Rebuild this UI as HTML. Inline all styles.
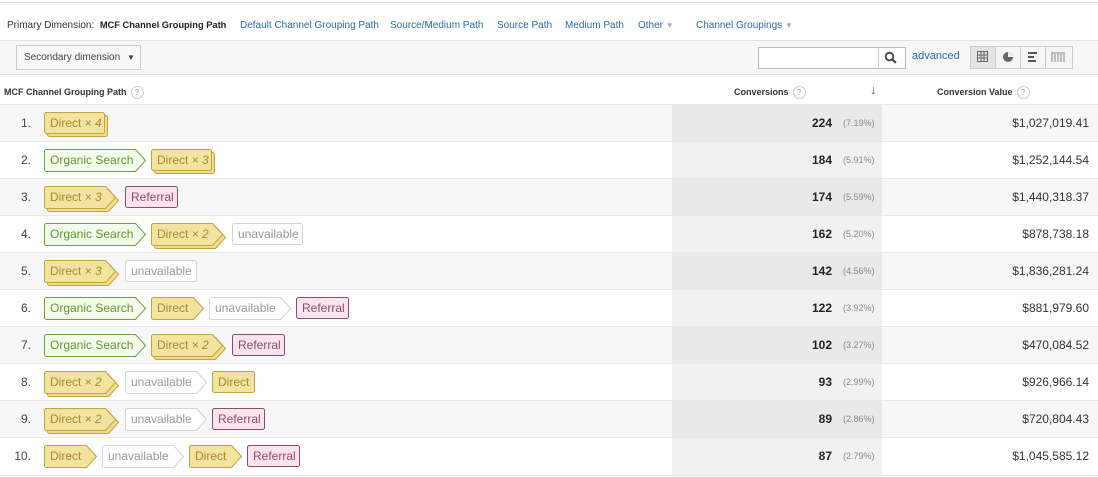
<!DOCTYPE html><html><head><meta charset="utf-8"><style>
body{margin:0;width:1098px;height:477px;overflow:hidden;background:#fff;font-family:"Liberation Sans",sans-serif;position:relative}
.a{position:absolute;white-space:nowrap}
.l{color:#2a6ab0}
.row{position:absolute;left:0;width:1098px;height:37px;border-top:1px solid #e8e8e8}
.row .c{position:absolute;left:672px;width:210px;top:0;height:37px}
.n{position:absolute;left:0;width:31px;text-align:right;top:11px;font-size:12px;color:#444}
.cv{position:absolute;left:700px;width:132px;text-align:right;top:11px;font-size:12px;font-weight:bold;color:#222}
.pc{position:absolute;left:843px;top:13px;font-size:9px;color:#888}
.val{position:absolute;right:9px;top:11px;font-size:12px;color:#333}
svg{position:absolute;left:0;top:0}
svg text{font-family:"Liberation Sans",sans-serif;font-size:12px}
.q{display:inline-block;width:11px;height:11px;border:1px solid #ccc;border-radius:50%;font-size:8px;color:#bbb;text-align:center;line-height:11px;vertical-align:middle;margin-left:4px}
</style></head><body>
<div class="a" style="left:0;top:2px;width:1098px;border-top:1px solid #e6e6e6"></div>
<div class="a" style="left:7px;top:20px;font-size:10px;color:#333">Primary Dimension:&nbsp; <span style="color:#222;font-weight:bold;font-size:9.3px">MCF Channel Grouping Path</span></div>
<div class="a l" style="left:240px;top:20px;font-size:10px">Default Channel Grouping Path</div>
<div class="a l" style="left:390px;top:20px;font-size:10px">Source/Medium Path</div>
<div class="a l" style="left:497px;top:20px;font-size:10px">Source Path</div>
<div class="a l" style="left:565px;top:20px;font-size:10px">Medium Path</div>
<div class="a l" style="left:638px;top:20px;font-size:10px">Other <span style="color:#aaa;font-size:8px">▼</span></div>
<div class="a l" style="left:696px;top:20px;font-size:10px">Channel Groupings <span style="color:#aaa;font-size:8px">▼</span></div>
<div class="a" style="left:0;top:40px;width:1098px;height:33px;background:#f7f7f7;border-top:1px solid #e2e2e2;border-bottom:1px solid #e2e2e2"></div>
<div class="a" style="left:16px;top:45px;width:123px;height:23px;border:1px solid #ccc;background:#f8f8f8;font-size:10px;color:#444;line-height:23px;text-indent:7px">Secondary dimension <span style="font-size:8px;margin-left:4px">▼</span></div>
<div class="a" style="left:758px;top:47px;width:146px;height:20px;border:1px solid #bbb;background:#fff"></div>
<div class="a" style="left:878px;top:47px;width:1px;height:20px;background:#ccc"></div>
<svg style="left:884px;top:51px" width="14" height="14"><circle cx="5.5" cy="5.5" r="3.8" fill="none" stroke="#444" stroke-width="1.8"/><path d="M8.3 8.3l3.5 3.5" stroke="#444" stroke-width="2.2"/></svg>
<div class="a l" style="left:912px;top:50px;font-size:11px">advanced</div>
<div class="a" style="left:970px;top:46px;width:101px;height:21px;border:1px solid #ccc;background:#f5f5f5"></div>
<div class="a" style="left:971px;top:47px;width:24px;height:21px;background:#e4e4e4"></div>
<div class="a" style="left:995px;top:47px;width:1px;height:21px;background:#ccc"></div>
<div class="a" style="left:1020px;top:47px;width:1px;height:21px;background:#ccc"></div>
<div class="a" style="left:1045px;top:47px;width:1px;height:21px;background:#ccc"></div>
<svg style="left:977px;top:51px" width="90" height="12"><g stroke="#666" fill="none" stroke-width="1"><rect x=".5" y=".5" width="10" height="10"/><path d="M4 .5v10M7 .5v10M.5 4h10M.5 7h10"/></g><circle cx="31" cy="6" r="5" fill="#666"/><path d="M31 6V1a5 5 0 0 1 5 5z" fill="#eee"/><path d="M51 2h9M51 6h6M51 10h8" stroke="#555" stroke-width="2"/><path d="M75 1v10M78 3v8M81 3v8M84 3v8M87 3v8M75 2h13" stroke="#888" stroke-width="1"/></svg>
<div class="a" style="left:4px;top:86px;font-size:9px;font-weight:bold;color:#333">MCF Channel Grouping Path<span class="q">?</span></div>
<div class="a" style="left:734px;top:86px;font-size:9px;font-weight:bold;color:#333">Conversions<span class="q">?</span></div>
<div class="a" style="left:870px;top:82px;font-size:13px;color:#555">↓</div>
<div class="a" style="left:937px;top:86px;font-size:9px;font-weight:bold;color:#333">Conversion Value<span class="q">?</span></div>

<div class="row" style="top:104px;background:#f7f7f7"><div class="c" style="background:#e9e9e9"></div><div class="n">1.</div>
<svg width="600" height="37"><rect x="47.5" y="10.5" width="60" height="21" rx="2" fill="#f0dc8c" stroke="#c1a43c"/><rect x="44.5" y="7.5" width="60" height="21" rx="2" fill="#f3e3a0" stroke="#c1a43c"/><text x="50" y="22" fill="#a28c2c">Direct <tspan font-style="italic">× 4</tspan></text></svg>
<div class="cv">224</div><div class="pc">(7.19%)</div><div class="val">$1,027,019.41</div></div>

<div class="row" style="top:141px;background:#fff"><div class="c" style="background:#f1f1f1"></div><div class="n">2.</div>
<svg width="600" height="37"><path d="M46.5 7.5h89l10 11l-10 11h-89a2 2 0 0 1-2-2v-18a2 2 0 0 1 2-2z" fill="#f4fbec" stroke="#6aa33a"/><text x="50" y="22" fill="#5d9a2e">Organic Search</text><rect x="154.5" y="10.5" width="60" height="21" rx="2" fill="#f0dc8c" stroke="#c1a43c"/><rect x="151.5" y="7.5" width="60" height="21" rx="2" fill="#f3e3a0" stroke="#c1a43c"/><text x="157" y="22" fill="#a28c2c">Direct <tspan font-style="italic">× 3</tspan></text></svg>
<div class="cv">184</div><div class="pc">(5.91%)</div><div class="val">$1,252,144.54</div></div>

<div class="row" style="top:178px;background:#f7f7f7"><div class="c" style="background:#e9e9e9"></div><div class="n">3.</div>
<svg width="600" height="37"><path d="M49.5 10.5h59l10 11l-10 11h-59a2 2 0 0 1-2-2v-18a2 2 0 0 1 2-2z" fill="#f0dc8c" stroke="#c1a43c"/><path d="M46.5 7.5h59l10 11l-10 11h-59a2 2 0 0 1-2-2v-18a2 2 0 0 1 2-2z" fill="#f3e3a0" stroke="#c1a43c"/><text x="50" y="22" fill="#a28c2c">Direct <tspan font-style="italic">× 3</tspan></text><rect x="125.5" y="7.5" width="52" height="21" rx="2" fill="#fce4ef" stroke="#8c4c6c"/><text x="131" y="22" fill="#8c4c6c">Referral</text></svg>
<div class="cv">174</div><div class="pc">(5.59%)</div><div class="val">$1,440,318.37</div></div>

<div class="row" style="top:215px;background:#fff"><div class="c" style="background:#f1f1f1"></div><div class="n">4.</div>
<svg width="600" height="37"><path d="M46.5 7.5h89l10 11l-10 11h-89a2 2 0 0 1-2-2v-18a2 2 0 0 1 2-2z" fill="#f4fbec" stroke="#6aa33a"/><text x="50" y="22" fill="#5d9a2e">Organic Search</text><path d="M156.5 10.5h59l10 11l-10 11h-59a2 2 0 0 1-2-2v-18a2 2 0 0 1 2-2z" fill="#f0dc8c" stroke="#c1a43c"/><path d="M153.5 7.5h59l10 11l-10 11h-59a2 2 0 0 1-2-2v-18a2 2 0 0 1 2-2z" fill="#f3e3a0" stroke="#c1a43c"/><text x="157" y="22" fill="#a28c2c">Direct <tspan font-style="italic">× 2</tspan></text><rect x="232.5" y="7.5" width="70" height="21" rx="2" fill="#fff" stroke="#d4d4d4"/><text x="238" y="22" fill="#999">unavailable</text></svg>
<div class="cv">162</div><div class="pc">(5.20%)</div><div class="val">$878,738.18</div></div>

<div class="row" style="top:252px;background:#f7f7f7"><div class="c" style="background:#e9e9e9"></div><div class="n">5.</div>
<svg width="600" height="37"><path d="M49.5 10.5h59l10 11l-10 11h-59a2 2 0 0 1-2-2v-18a2 2 0 0 1 2-2z" fill="#f0dc8c" stroke="#c1a43c"/><path d="M46.5 7.5h59l10 11l-10 11h-59a2 2 0 0 1-2-2v-18a2 2 0 0 1 2-2z" fill="#f3e3a0" stroke="#c1a43c"/><text x="50" y="22" fill="#a28c2c">Direct <tspan font-style="italic">× 3</tspan></text><rect x="125.5" y="7.5" width="71" height="21" rx="2" fill="#fff" stroke="#d4d4d4"/><text x="131" y="22" fill="#999">unavailable</text></svg>
<div class="cv">142</div><div class="pc">(4.56%)</div><div class="val">$1,836,281.24</div></div>

<div class="row" style="top:289px;background:#fff"><div class="c" style="background:#f1f1f1"></div><div class="n">6.</div>
<svg width="600" height="37"><path d="M46.5 7.5h89l10 11l-10 11h-89a2 2 0 0 1-2-2v-18a2 2 0 0 1 2-2z" fill="#f4fbec" stroke="#6aa33a"/><text x="50" y="22" fill="#5d9a2e">Organic Search</text><path d="M153.5 7.5h40l10 11l-10 11h-40a2 2 0 0 1-2-2v-18a2 2 0 0 1 2-2z" fill="#f3e3a0" stroke="#c1a43c"/><text x="157" y="22" fill="#a28c2c">Direct</text><path d="M211.5 7.5h69l10 11l-10 11h-69a2 2 0 0 1-2-2v-18a2 2 0 0 1 2-2z" fill="#fff" stroke="#d4d4d4"/><text x="215" y="22" fill="#999">unavailable</text><rect x="296.5" y="7.5" width="52" height="21" rx="2" fill="#fce4ef" stroke="#8c4c6c"/><text x="302" y="22" fill="#8c4c6c">Referral</text></svg>
<div class="cv">122</div><div class="pc">(3.92%)</div><div class="val">$881,979.60</div></div>

<div class="row" style="top:326px;background:#f7f7f7"><div class="c" style="background:#e9e9e9"></div><div class="n">7.</div>
<svg width="600" height="37"><path d="M46.5 7.5h89l10 11l-10 11h-89a2 2 0 0 1-2-2v-18a2 2 0 0 1 2-2z" fill="#f4fbec" stroke="#6aa33a"/><text x="50" y="22" fill="#5d9a2e">Organic Search</text><path d="M156.5 10.5h59l10 11l-10 11h-59a2 2 0 0 1-2-2v-18a2 2 0 0 1 2-2z" fill="#f0dc8c" stroke="#c1a43c"/><path d="M153.5 7.5h59l10 11l-10 11h-59a2 2 0 0 1-2-2v-18a2 2 0 0 1 2-2z" fill="#f3e3a0" stroke="#c1a43c"/><text x="157" y="22" fill="#a28c2c">Direct <tspan font-style="italic">× 2</tspan></text><rect x="232.5" y="7.5" width="52" height="21" rx="2" fill="#fce4ef" stroke="#8c4c6c"/><text x="238" y="22" fill="#8c4c6c">Referral</text></svg>
<div class="cv">102</div><div class="pc">(3.27%)</div><div class="val">$470,084.52</div></div>

<div class="row" style="top:363px;background:#fff"><div class="c" style="background:#f1f1f1"></div><div class="n">8.</div>
<svg width="600" height="37"><path d="M49.5 10.5h59l10 11l-10 11h-59a2 2 0 0 1-2-2v-18a2 2 0 0 1 2-2z" fill="#f0dc8c" stroke="#c1a43c"/><path d="M46.5 7.5h59l10 11l-10 11h-59a2 2 0 0 1-2-2v-18a2 2 0 0 1 2-2z" fill="#f3e3a0" stroke="#c1a43c"/><text x="50" y="22" fill="#a28c2c">Direct <tspan font-style="italic">× 2</tspan></text><path d="M127.5 7.5h69l10 11l-10 11h-69a2 2 0 0 1-2-2v-18a2 2 0 0 1 2-2z" fill="#fff" stroke="#d4d4d4"/><text x="131" y="22" fill="#999">unavailable</text><rect x="212.5" y="7.5" width="42" height="21" rx="2" fill="#f3e3a0" stroke="#c1a43c"/><text x="218" y="22" fill="#a28c2c">Direct</text></svg>
<div class="cv">93</div><div class="pc">(2.99%)</div><div class="val">$926,966.14</div></div>

<div class="row" style="top:400px;background:#f7f7f7"><div class="c" style="background:#e9e9e9"></div><div class="n">9.</div>
<svg width="600" height="37"><path d="M49.5 10.5h59l10 11l-10 11h-59a2 2 0 0 1-2-2v-18a2 2 0 0 1 2-2z" fill="#f0dc8c" stroke="#c1a43c"/><path d="M46.5 7.5h59l10 11l-10 11h-59a2 2 0 0 1-2-2v-18a2 2 0 0 1 2-2z" fill="#f3e3a0" stroke="#c1a43c"/><text x="50" y="22" fill="#a28c2c">Direct <tspan font-style="italic">× 2</tspan></text><path d="M127.5 7.5h69l10 11l-10 11h-69a2 2 0 0 1-2-2v-18a2 2 0 0 1 2-2z" fill="#fff" stroke="#d4d4d4"/><text x="131" y="22" fill="#999">unavailable</text><rect x="212.5" y="7.5" width="52" height="21" rx="2" fill="#fce4ef" stroke="#8c4c6c"/><text x="218" y="22" fill="#8c4c6c">Referral</text></svg>
<div class="cv">89</div><div class="pc">(2.86%)</div><div class="val">$720,804.43</div></div>

<div class="row" style="top:437px;background:#fff;border-bottom:1px solid #e8e8e8"><div class="c" style="background:#f1f1f1"></div><div class="n">10.</div>
<svg width="600" height="37"><path d="M46.5 7.5h40l10 11l-10 11h-40a2 2 0 0 1-2-2v-18a2 2 0 0 1 2-2z" fill="#f3e3a0" stroke="#c1a43c"/><text x="50" y="22" fill="#a28c2c">Direct</text><path d="M104.5 7.5h69l10 11l-10 11h-69a2 2 0 0 1-2-2v-18a2 2 0 0 1 2-2z" fill="#fff" stroke="#d4d4d4"/><text x="108" y="22" fill="#999">unavailable</text><path d="M191.5 7.5h40l10 11l-10 11h-40a2 2 0 0 1-2-2v-18a2 2 0 0 1 2-2z" fill="#f3e3a0" stroke="#c1a43c"/><text x="195" y="22" fill="#a28c2c">Direct</text><rect x="247.5" y="7.5" width="52" height="21" rx="2" fill="#fce4ef" stroke="#8c4c6c"/><text x="253" y="22" fill="#8c4c6c">Referral</text></svg>
<div class="cv">87</div><div class="pc">(2.79%)</div><div class="val">$1,045,585.12</div></div>
</body></html>
